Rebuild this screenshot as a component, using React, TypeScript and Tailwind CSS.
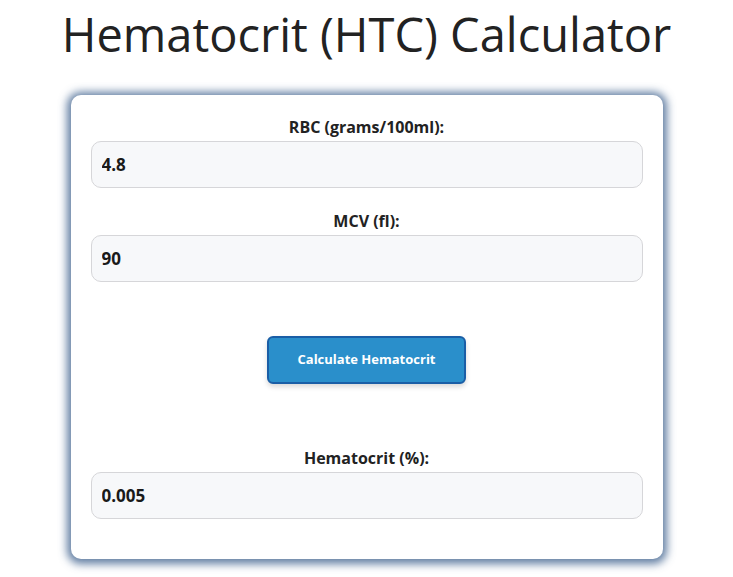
import React, { useState } from 'react';

const Field: React.FC<{ label: string; value: string; onChange?: (v: string) => void; readOnly?: boolean }> = ({
  label,
  value,
  onChange,
  readOnly,
}) => (
  <div className="flex flex-col">
    <label className="text-center text-[16px] leading-[24px] font-bold text-[#222]">{label}</label>
    <input
      className="mt-[2px] h-[47px] w-full rounded-[10px] border border-[#d6d6d9] bg-[#f7f8fa] px-[10px] text-[17px] font-bold text-[#1a1a1a] outline-none"
      value={value}
      readOnly={readOnly}
      onChange={(e) => onChange && onChange(e.target.value)}
    />
  </div>
);

export default function App() {
  const [rbc, setRbc] = useState('4.8');
  const [mcv, setMcv] = useState('90');
  const [result, setResult] = useState('0.005');

  const calculate = () => {
    const r = parseFloat(rbc);
    const m = parseFloat(mcv);
    if (isNaN(r) || isNaN(m)) return;
    setResult(((r * m) / 100000).toFixed(3));
  };

  return (
    <div className="min-h-screen bg-white font-['Open_Sans','Noto_Sans',sans-serif]">
      <h1 className="pt-[2px] text-center text-[47px] leading-[64px] font-normal text-[#222]">Hematocrit (HTC) Calculator</h1>
      <div className="mx-auto mt-[29px] w-[592px] rounded-[10px] bg-white px-[20px] pt-[20px] pb-[40px] shadow-[0_1px_8px_4px_rgba(60,95,140,0.8)]">
        <Field label="RBC (grams/100ml):" value={rbc} onChange={setRbc} />
        <div className="mt-[21px]">
          <Field label="MCV (fl):" value={mcv} onChange={setMcv} />
        </div>
        <div className="mt-[54px] flex justify-center">
          <button
            onClick={calculate}
            className="h-[48px] w-[199px] rounded-[6px] border-2 border-[#1a5ea6] bg-[#2a8fcb] text-[13px] font-bold text-white shadow-[0_3px_5px_rgba(0,0,0,0.15)]"
          >
            Calculate Hematocrit
          </button>
        </div>
        <div className="mt-[62px]">
          <Field label="Hematocrit (%):" value={result} readOnly />
        </div>
      </div>
    </div>
  );
}
